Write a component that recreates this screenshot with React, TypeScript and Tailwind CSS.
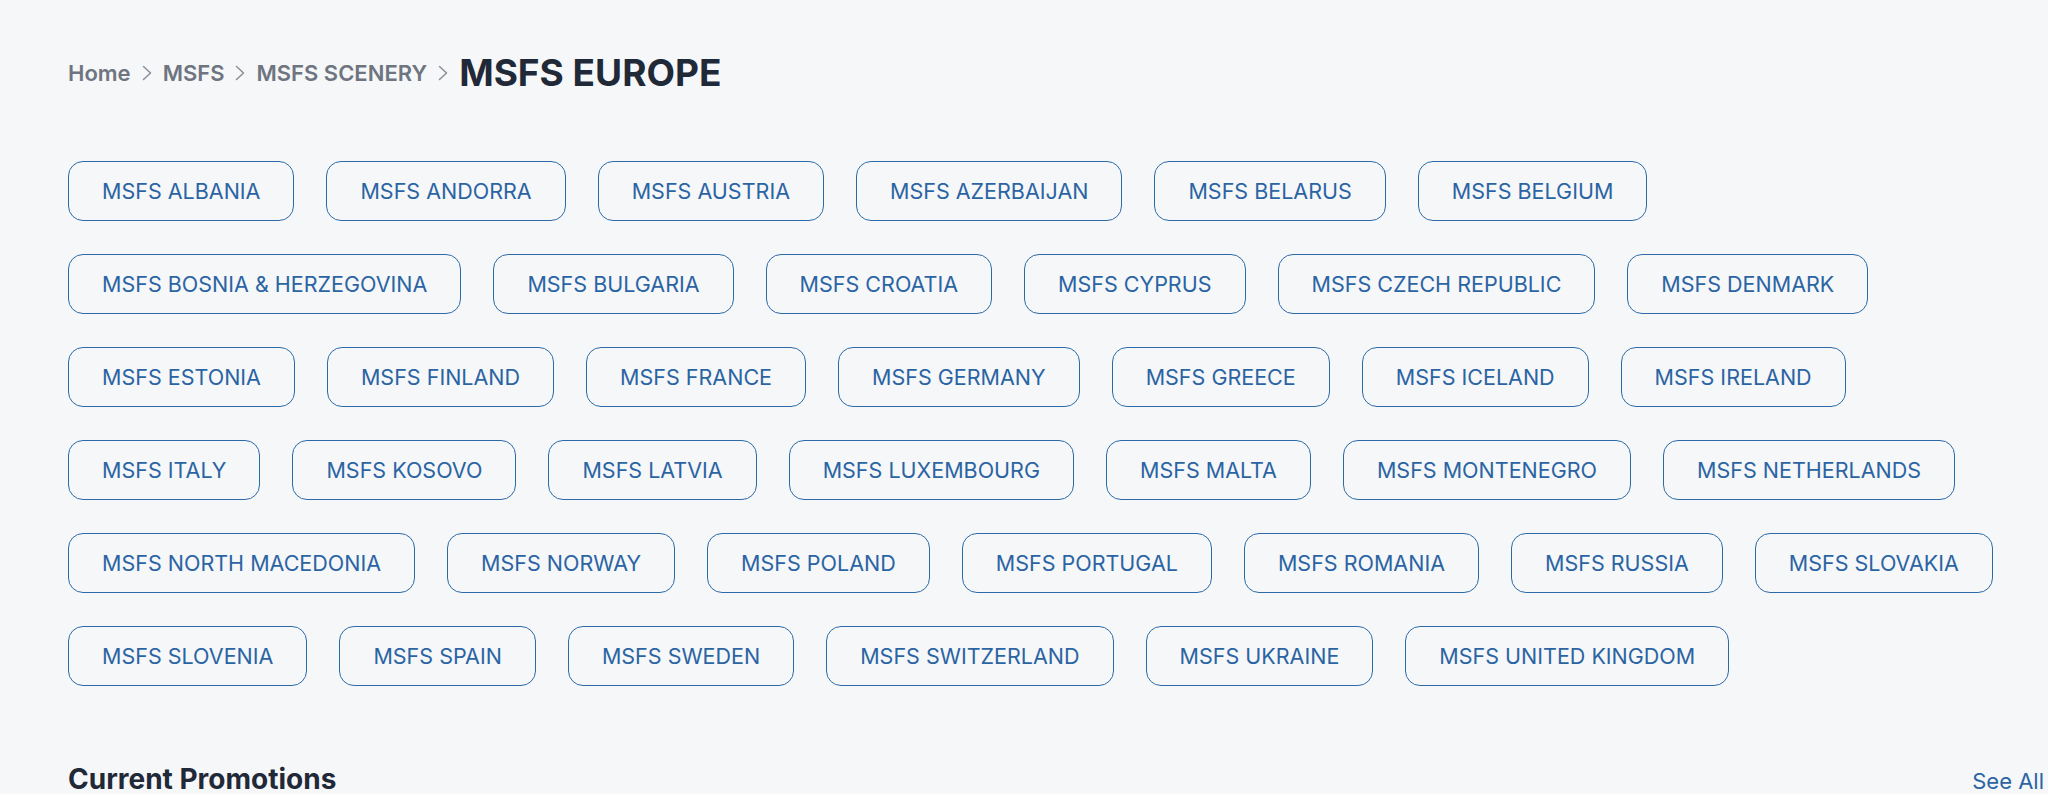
import React from 'react';

const rows: string[][] = [
  ['ALBANIA', 'ANDORRA', 'AUSTRIA', 'AZERBAIJAN', 'BELARUS', 'BELGIUM'],
  ['BOSNIA & HERZEGOVINA', 'BULGARIA', 'CROATIA', 'CYPRUS', 'CZECH REPUBLIC', 'DENMARK'],
  ['ESTONIA', 'FINLAND', 'FRANCE', 'GERMANY', 'GREECE', 'ICELAND', 'IRELAND'],
  ['ITALY', 'KOSOVO', 'LATVIA', 'LUXEMBOURG', 'MALTA', 'MONTENEGRO', 'NETHERLANDS'],
  ['NORTH MACEDONIA', 'NORWAY', 'POLAND', 'PORTUGAL', 'ROMANIA', 'RUSSIA', 'SLOVAKIA'],
  ['SLOVENIA', 'SPAIN', 'SWEDEN', 'SWITZERLAND', 'UKRAINE', 'UNITED KINGDOM'],
];

const crumbs = ['Home', 'MSFS', 'MSFS SCENERY'];

const Chevron = () => (
  <svg width="10" height="16" viewBox="0 0 10 16" fill="none" className="mx-[11px] text-[#8a8f98]">
    <path d="M1.5 1.5 L8.5 8 L1.5 14.5" stroke="currentColor" strokeWidth="1.5" strokeLinecap="round" strokeLinejoin="round" />
  </svg>
);

export default function App() {
  return (
    <div
      className="min-h-[794px] bg-[#f6f7f9] pl-[68px] pr-[4px] pt-[52px]"
      style={{ fontFamily: 'Inter, "Noto Sans", sans-serif' }}
    >
      {/* Breadcrumb */}
      <nav className="flex items-center">
        {crumbs.map((c) => (
          <React.Fragment key={c}>
            <a className="text-[22px] font-semibold text-[#6e7580]">{c}</a>
            <Chevron />
          </React.Fragment>
        ))}
        <h1 className="text-[37px] font-bold leading-[42px] text-[#1f2937]">MSFS EUROPE</h1>
      </nav>

      {/* Sub categories */}
      <div className="mt-[67px] flex flex-col gap-[33px]">
        {rows.map((row, i) => (
          <div key={i} className="flex gap-[32px]">
            {row.map((name) => (
              <button
                key={name}
                className="flex h-[60px] items-center rounded-[15px] border-[1.5px] border-[#2d6aa8] px-[33px] text-[21.5px] text-[#2b64a3]"
              >
                MSFS {name}
              </button>
            ))}
          </div>
        ))}
      </div>

      {/* Promotions header */}
      <div className="mt-[72px] flex items-baseline justify-between">
        <h2 className="text-[28px] font-bold text-[#1f2937]">Current Promotions</h2>
        <a className="text-[22px] text-[#2b64a3]">See All</a>
      </div>
    </div>
  );
}
